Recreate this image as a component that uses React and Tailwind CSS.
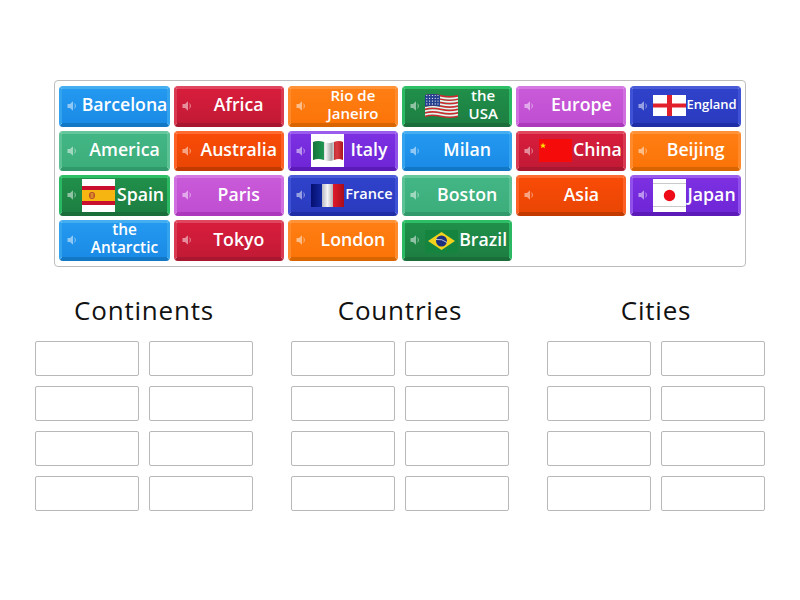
const Speaker = () => (
  <svg width="11" height="12" viewBox="0 0 11 12" className="shrink-0 opacity-50">
    <path d="M0.5 4H3L6 1.200V10.800L3 8H0.5Z" fill="#fff" />
    <path d="M7.500 3.600C8.600 4.800 8.600 7.200 7.500 8.400" fill="none" stroke="#fff" strokeWidth="1" />
  </svg>
);

const Flag = ({ children }) => (
  <svg width="33" height="33" viewBox="0 0 33 33" className="shrink-0">
    <defs>
      <linearGradient id="sheen" x1="0" x2="1" y1="0" y2="0">
        <stop offset="0" stopColor="#000" stopOpacity="0.25" />
        <stop offset="0.3" stopColor="#000" stopOpacity="0.05" />
        <stop offset="0.42" stopColor="#fff" stopOpacity="0.3" />
        <stop offset="0.62" stopColor="#000" stopOpacity="0.3" />
        <stop offset="0.8" stopColor="#fff" stopOpacity="0.15" />
        <stop offset="1" stopColor="#000" stopOpacity="0.2" />
      </linearGradient>
      <linearGradient id="frw" x1="0" x2="1" y1="0" y2="0">
        <stop offset="0" stopColor="#b8b8c4" />
        <stop offset="0.5" stopColor="#f4f4f4" />
        <stop offset="1" stopColor="#b8b0b4" />
      </linearGradient>
      <linearGradient id="frb" x1="0" x2="1" y1="0" y2="0">
        <stop offset="0" stopColor="#050f70" />
        <stop offset="1" stopColor="#1328a0" />
      </linearGradient>
      <linearGradient id="frr" x1="0" x2="1" y1="0" y2="0">
        <stop offset="0" stopColor="#e01a2a" />
        <stop offset="1" stopColor="#a80c1c" />
      </linearGradient>
    </defs>
    {children}
  </svg>
);

const flags = {
  usa: (
    <Flag>
      <g>
        {[0, 1, 2, 3, 4, 5, 6].map((i) => (
          <path key={i} d={`M0 ${6 + i * 3.4}q8 -2 16 0t17 0v1.700q-8 2 -17 0t-16 0z`} fill="#d3272e" />
        ))}
        {[0, 1, 2, 3, 4, 5].map((i) => (
          <path key={i} d={`M0 ${7.7 + i * 3.4}q8 -2 16 0t17 0v1.700q-8 2 -17 0t-16 0z`} fill="#f5eeee" />
        ))}
        <path d="M0 6q8 -2 15 0v11.500q-8 -1.500 -15 0z" fill="#25408f" />
        {[0, 1, 2, 3].map((r) =>
          [0, 1, 2, 3, 4].map((c) => <circle key={`${r}-${c}`} cx={1.8 + c * 2.8} cy={6.5 + r * 2.8} r="0.600" fill="#fff" />)
        )}
      </g>
    </Flag>
  ),
  italy: (
    <Flag>
      <rect width="33" height="33" fill="#fff" />
      <path d="M2 8q5 -2 11 0v18q-6 -2 -11 0z" fill="#1d9a50" />
      <path d="M13 8q5 2 10 0v18q-5 2 -10 0z" fill="#eeeeee" />
      <path d="M23 8q5 -2 9 0v18q-4 -2 -9 0z" fill="#d2181f" />
      <path d="M2 8q5 -2 11 0q5 2 10 0q5 -2 9 0v18q-4 -2 -9 0q-5 2 -10 0q-6 -2 -11 0z" fill="url(#sheen)" />
    </Flag>
  ),
  england: (
    <Flag>
      <rect y="6" width="33" height="21" fill="#fff" />
      <rect x="14" y="6" width="5" height="21" fill="#e2202c" />
      <rect y="14.500" width="33" height="4" fill="#e2202c" />
    </Flag>
  ),
  china: (
    <Flag>
      <rect y="5" width="33" height="23" fill="#f60b0b" />
      <polygon points="4,8.500 4.800,10.700 7,10.700 5.300,12.100 5.900,14.300 4,13 2.100,14.300 2.700,12.100 1,10.700 3.200,10.700" fill="#ffde00" />
    </Flag>
  ),
  spain: (
    <Flag>
      <rect width="33" height="33" fill="#fff" />
      <rect y="7" width="33" height="19" fill="#c8102e" />
      <rect y="11" width="33" height="11" fill="#f6b511" />
      <ellipse cx="10" cy="16.500" rx="3" ry="3.400" fill="#b5482a" />
      <rect x="8.500" y="14" width="3" height="5" fill="#d98a2a" />
    </Flag>
  ),
  france: (
    <Flag>
      <rect y="5" width="11" height="23" fill="url(#frb)" />
      <rect x="11" y="5" width="11" height="23" fill="url(#frw)" />
      <rect x="22" y="5" width="11" height="23" fill="url(#frr)" />
    </Flag>
  ),
  japan: (
    <Flag>
      <rect width="33" height="33" fill="#fff" />
      <rect y="4" width="33" height="1" fill="#c9c9c9" />
      <rect y="27" width="33" height="1" fill="#c9c9c9" />
      <circle cx="16.500" cy="16.500" r="5.700" fill="#ee0a16" />
    </Flag>
  ),
  brazil: (
    <Flag>
      <rect y="6" width="33" height="23" fill="#14843f" />
      <path d="M3 17L16.500 8L30 17L16.500 26Z" fill="#f2d21d" />
      <circle cx="16.500" cy="17" r="5.500" fill="#1d2f7e" />
      <path d="M11 15.500q6 -1 11 3" stroke="#fff" strokeWidth="0.700" fill="none" />
    </Flag>
  ),
};

const blue = "border-t-[#44aef0] border-x-[#33a3ee] border-b-[#1277c4] bg-gradient-to-b from-[#2499f0] to-[#1a8be6]";
const red = "border-t-[#e0475f] border-x-[#d93a52] border-b-[#a8162f] bg-gradient-to-b from-[#d81d3c] to-[#c21a36]";
const orange = "border-t-[#ff9136] border-x-[#ff8a2b] border-b-[#d96500] bg-gradient-to-b from-[#ff7e13] to-[#fb7408]";
const green = "border-t-[#2dbf66] border-x-[#2ab862] border-b-[#1a6e3a] bg-gradient-to-b from-[#20904a] to-[#1d7f42]";
const lilac = "border-t-[#d478e2] border-x-[#d06fdf] border-b-[#ac38bc] bg-gradient-to-b from-[#c95ad8] to-[#c04ed2]";
const navy = "border-t-[#4a5bd8] border-x-[#3f51d4] border-b-[#1f2ea6] bg-gradient-to-b from-[#2f42ca] to-[#2a3bbf]";
const teal = "border-t-[#66c69c] border-x-[#5cc195] border-b-[#309a6c] bg-gradient-to-b from-[#43b685] to-[#3cae7c]";
const fire = "border-t-[#ff6a30] border-x-[#fd6126] border-b-[#c23a00] bg-gradient-to-b from-[#f94b07] to-[#ea4604]";
const purple = "border-t-[#9a5cec] border-x-[#9050ea] border-b-[#5c1ab8] bg-gradient-to-b from-[#7c30e2] to-[#6f26d6]";

const tiles = [
  { t: "Barcelona", c: blue },
  { t: "Africa", c: red },
  { t: "Rio de Janeiro", c: orange, s: "text-[15px] leading-[18px] w-[70px]" },
  { t: "the USA", c: green, f: "usa", s: "text-[15px] leading-[18px] w-[40px]" },
  { t: "Europe", c: lilac },
  { t: "England", c: navy, f: "england", s: "text-[13px]" },
  { t: "America", c: teal },
  { t: "Australia", c: fire },
  { t: "Italy", c: purple, f: "italy" },
  { t: "Milan", c: blue },
  { t: "China", c: red, f: "china" },
  { t: "Beijing", c: orange },
  { t: "Spain", c: green, f: "spain" },
  { t: "Paris", c: lilac },
  { t: "France", c: navy, f: "france", s: "text-[14.5px]" },
  { t: "Boston", c: teal },
  { t: "Asia", c: fire },
  { t: "Japan", c: purple, f: "japan" },
  { t: "the Antarctic", c: blue, s: "text-[15.400px] leading-[18px] w-[80px]" },
  { t: "Tokyo", c: red },
  { t: "London", c: orange },
  { t: "Brazil", c: green, f: "brazil" },
];

const Tile = ({ t, c, f, s }) => (
  <div className={`flex h-full min-w-0 items-center rounded-[4px] border-t-[3px] border-x-[3px] border-b-[4px] pl-[5px] ${c}`}>
    <Speaker />
    <div className={f ? "ml-[4px] flex h-[33px] w-[33px] shrink-0 items-center" : "w-[5px] shrink-0"}>{f ? flags[f] : null}</div>
    <div className="flex min-w-0 flex-1 justify-center pb-[3px] pr-[1px]">
      <span className={`whitespace-normal text-center font-semibold text-white ${s || "text-[17.700px] leading-[22px]"}`}>{t}</span>
    </div>
  </div>
);

const groups = ["Continents", "Countries", "Cities"];

const Group = ({ name }) => (
  <div className="w-[218px]">
    <div className="flex h-[61px] items-start justify-center pt-[12px] text-[26px] leading-[36px] tracking-[0.800px] text-[#111]">{name}</div>
    <div className="grid grid-cols-2 gap-x-[10px] gap-y-[10px]">
      {Array.from({ length: 8 }).map((_, i) => (
        <div key={i} className="h-[35px] rounded-[2px] border border-[#b8b8b8] bg-white" />
      ))}
    </div>
  </div>
);

export default function App() {
  return (
    <div className="flex h-[600px] w-[800px] flex-col items-center overflow-hidden bg-white pt-[80px] font-['Open_Sans',sans-serif]">
      <div className="h-[187px] w-[692px] rounded-[4px] border border-[#bdbdbd] pl-[4.400px] pr-[4.300px] pb-[4px] pt-[5px]">
        <div className="grid grid-cols-6 grid-rows-[40.700px_40.700px_40.700px_41.300px] gap-x-[4px] gap-y-[4px]">
          {tiles.map((x) => (
            <Tile key={x.t} {...x} />
          ))}
        </div>
      </div>
      <div className="mt-[13px] flex w-[730px] justify-between">
        {groups.map((g) => (
          <Group key={g} name={g} />
        ))}
      </div>
    </div>
  );
}
